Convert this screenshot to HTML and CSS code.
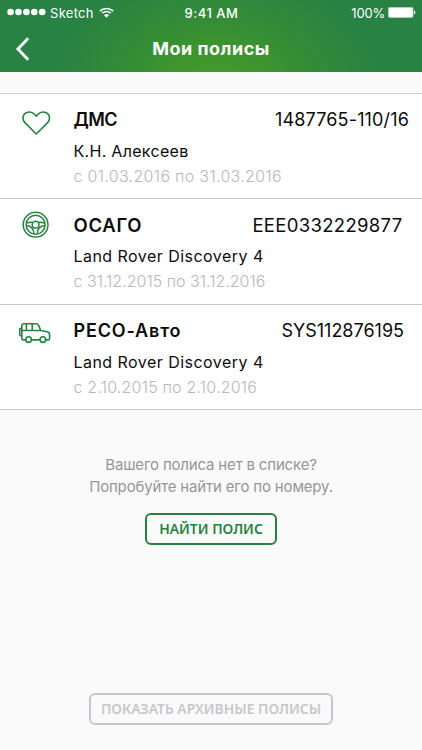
FILE: index.html
```
<!DOCTYPE html>
<html lang="ru">
<head>
<meta charset="utf-8">
<title>Мои полисы</title>
<link rel="stylesheet" href="styles.css">
</head>
<body>
<header class="header">
  <div class="status">
    <div class="carrier">
      <svg class="dots" width="39" height="8" viewBox="0 0 39 8"><circle cx="3.6" cy="4" r="3.3"/><circle cx="11.5" cy="4" r="3.3"/><circle cx="19.4" cy="4" r="3.3"/><circle cx="27.3" cy="4" r="3.3"/><circle cx="35.2" cy="4" r="3.3"/></svg>
      <span class="carrier-name">Sketch</span>
      <svg class="wifi" width="15" height="11" viewBox="0 0 15 11"><path d="M.8 4.1a9.6 9.6 0 0 1 13.4 0M3.1 6.3a6.3 6.3 0 0 1 8.8 0" fill="none" stroke="#fff" stroke-width="1.5"/><path d="M5 8.2a3.6 3.6 0 0 1 5 0l-2.5 2.5z" fill="#fff"/></svg>
    </div>
    <span class="time">9:41 AM</span>
    <div class="power">
      <span class="percent">100%</span>
      <svg width="28" height="11" viewBox="0 0 28 11"><rect x=".4" y=".4" width="24.6" height="10" rx="1.4" fill="#fff" stroke="#b8dcb9" stroke-width=".8"/><path d="M26 3.5c1.8.5 1.8 3.5 0 4z" fill="#fff"/></svg>
    </div>
  </div>
  <nav class="nav">
    <svg class="back" width="14" height="24" viewBox="0 0 14 24"><path d="M13.2 1.2 3 12l10.2 10.8" fill="none" stroke="#fff" stroke-width="3"/></svg>
    <h1 class="title">Мои полисы</h1>
  </nav>
</header>
<main class="content">
  <ul class="policies">
    <li class="policy">
      <svg class="icon" width="34" height="30" viewBox="0 0 34 30"><path d="M18.3 28 6.9 16.6C4.2 13.7 4.4 9.9 6.8 7.7c2.7-2.5 7.1-2.3 9.5.3l2 2.1 2-2.1c2.5-2.6 6.8-2.8 9.4-.3 2.4 2.3 2.6 6.1-.1 8.9z"/></svg>
      <div class="info">
        <div class="line"><h2 class="kind k1">ДМС</h2><span class="number n1">1487765-110/16</span></div>
        <p class="name a1">К.Н. Алексеев</p>
        <p class="date d1">с 01.03.2016 по 31.03.2016</p>
      </div>
    </li>
    <li class="policy">
      <svg class="icon" width="34" height="30" viewBox="0 0 34 30"><g class="wheel"><circle cx="17.6" cy="13.7" r="12.4"/><circle cx="17.6" cy="13.7" r="9.5"/><circle cx="17.6" cy="13.7" r="3.4"/><path d="M8.4 11.5c3 .5 4.2-.2 6.2-.6M26.8 11.5c-3 .5-4.2-.2-6.2-.6M8.2 14.7c4.6-.2 7.5 2.6 7.7 8.2M27 14.7c-4.6-.2-7.5 2.6-7.7 8.2"/></g></svg>
      <div class="info">
        <div class="line"><h2 class="kind k2">ОСАГО</h2><span class="number n2">EEE0332229877</span></div>
        <p class="name a2">Land Rover Discovery 4</p>
        <p class="date d2">с 31.12.2015 по 31.12.2016</p>
      </div>
    </li>
    <li class="policy">
      <svg class="icon" width="34" height="30" viewBox="0 0 34 30"><path d="M7.8 22.9H5.2c-1 0-1.4-.5-1.4-1.4V8.4c0-1 .6-1.7 1.6-1.7h13c1.2 0 1.7.4 2.1 1.4l2.3 5.4 6.4 1.2c1.6.4 2.4 1.6 2.4 3.2v3.6c0 1-.4 1.4-1.4 1.4h-2.4M13.4 22.9h8.7M3.8 13.5h19M8.4 6.9v6.4M14.2 6.9v6.4M3.7 11.4H3c-1 0-1.3.5-1.3 1.3v4.7c0 .8.4 1.3 1.2 1.3h.9"/><circle cx="10.6" cy="22.6" r="2.8"/><circle cx="24.9" cy="22.6" r="2.8"/></svg>
      <div class="info">
        <div class="line"><h2 class="kind k3">РЕСО-Авто</h2><span class="number n3">SYS112876195</span></div>
        <p class="name a2">Land Rover Discovery 4</p>
        <p class="date d3">с 2.10.2015 по 2.10.2016</p>
      </div>
    </li>
  </ul>
  <p class="hint">Вашего полиса нет в списке?<br>Попробуйте найти его по номеру.</p>
  <button class="button find"><span class="label">НАЙТИ ПОЛИС</span></button>
  <button class="button archive"><span class="label">ПОКАЗАТЬ АРХИВНЫЕ ПОЛИСЫ</span></button>
</main>
</body>
</html>
```
FILE: styles.css
```
* { box-sizing: border-box; }
body {
  margin: 0;
  height: 750px;
  display: flex;
  flex-direction: column;
  overflow: hidden;
  background: #fafafa;
  color: #0c0c0c;
  font-family: Inter, "Liberation Sans", sans-serif;
}
h1, h2, p, ul { margin: 0; padding: 0; }
.header {
  height: 72px;
  color: #fff;
  background: radial-gradient(ellipse 165px 115px at 217px 84px, #459c2c 0%, #3c932f 35%, #31893a 68%, #278243 100%);
}
.status {
  height: 25px;
  padding: 1px 6px 0 7px;
  display: grid;
  grid-template-columns: 1fr auto 1fr;
  align-items: center;
  font-size: 13px;
  line-height: 24px;
}
.carrier, .power { display: flex; align-items: center; }
.carrier svg, .power svg { position: relative; top: -1px; }
.power { justify-content: flex-end; gap: 3px; }
.dots { fill: #fff; margin-right: 4px; }
.carrier-name { letter-spacing: .3px; margin-right: 5px; }
.time { font-weight: 500; letter-spacing: .5px; }
.percent { letter-spacing: -.2px; }
.nav {
  display: grid;
  grid-template-columns: 60px 1fr 60px;
  align-items: center;
  height: 48px;
}
.back { margin-left: 15px; }
.title { font-size: 18px; font-weight: 700; letter-spacing: .5px; text-align: center; line-height: 24px; }
.content { flex: 1; display: flex; flex-direction: column; align-items: center; }
.policies {
  margin-top: 21px;
  width: 100%;
  list-style: none;
  background: #fff;
  border-top: 1px solid #d0d0d0;
}
.policy {
  height: 105.5px;
  padding: 14px 13px 0 18px;
  display: flex;
  gap: 21.5px;
  border-bottom: 1px solid #c9c9c9;
}
.policy:first-child { height: 105px; }
.icon { flex: none; margin-top: -2px; fill: none; stroke: #27823f; stroke-width: 1.6; stroke-linejoin: round; }
.wheel { stroke-width: 1.5; }
.info { flex: 1; white-space: nowrap; }
.line { display: flex; justify-content: space-between; line-height: 24px; margin-bottom: 7px; }
.kind { font-size: 18px; font-weight: 600; }
.number { font-size: 18px; font-weight: 400; }
.name { font-size: 16px; line-height: 25px; }
.date { font-size: 16px; line-height: 24px; font-weight: 300; color: #b8b8bd; }
.k1 { letter-spacing: -.6px; }
.k2 { font-size: 18.5px; letter-spacing: .7px; }
.k3 { letter-spacing: .85px; }
.n1 { letter-spacing: .15px; }
.n2 { margin-right: 6.5px; font-size: 18.5px; letter-spacing: .32px; }
.n3 { margin-right: 5px; }
.a1 { letter-spacing: .3px; }
.a2 { letter-spacing: .46px; }
.d1 { letter-spacing: .31px; }
.d3 { letter-spacing: .2px; }
.hint {
  margin-top: 43.5px;
  font-size: 15px;
  letter-spacing: -.17px;
  line-height: 22px;
  text-align: center;
  white-space: nowrap;
  color: #969696;
}
.button {
  height: 32px;
  padding: 0;
  display: flex;
  justify-content: center;
  border: 2px solid #27823f;
  border-radius: 6px;
  background: transparent;
  color: #27823f;
  font: 600 15px/26px "Noto Sans", "Open Sans", sans-serif;
  white-space: nowrap;
}
.label { height: 28px; transform: scaleX(.925); }
.find { margin-top: 15.5px; width: 132px; }
.archive { margin-top: 148px; width: 244px; border-color: #c7c7cb; color: #c7c7cb; }
```
